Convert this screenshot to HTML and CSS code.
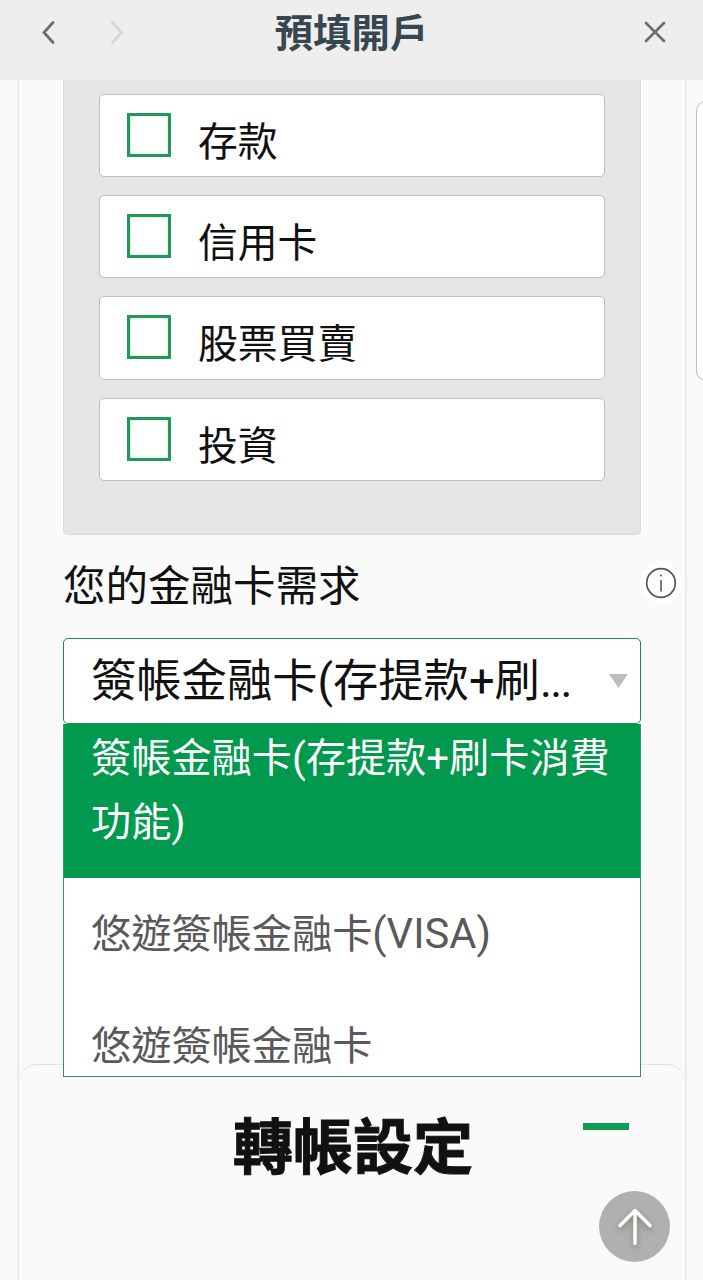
FILE: index.html
```html
<!DOCTYPE html>
<html lang="zh-Hant">
<head>
<meta charset="utf-8">
<title>預填開戶</title>
<link rel="stylesheet" href="styles.css">
</head>
<body>
<header class="topbar">
  <svg class="nav-icon nav-back" viewBox="0 0 16 24"><path d="M13 2.500 4 12.500l9 10"/></svg>
  <svg class="nav-icon nav-next" viewBox="0 0 16 24"><path d="m4.500 2.500 9 10-9 10"/></svg>
  <h1 class="topbar-title">預填開戶</h1>
  <svg class="nav-icon nav-close" viewBox="0 0 24 24"><path d="m3 3 18 18m0-18L3 21"/></svg>
</header>
<main class="page">
  <aside class="next-card"></aside>
  <section class="form">
    <ul class="checks">
      <li class="check"><span class="box"></span><span class="check-text">存款</span></li>
      <li class="check"><span class="box"></span><span class="check-text">信用卡</span></li>
      <li class="check"><span class="box"></span><span class="check-text">股票買賣</span></li>
      <li class="check"><span class="box"></span><span class="check-text">投資</span></li>
    </ul>
    <div class="field-head">
      <span class="field-label">您的金融卡需求</span>
      <svg class="info" viewBox="0 0 40 40"><circle class="info-bg" cx="20" cy="20" r="20"/><circle class="info-ring" cx="20" cy="20" r="14.300"/><path class="info-stem" d="M20 17v11.500"/><circle class="info-dot" cx="20" cy="12.500" r="1"/></svg>
    </div>
    <div class="select">
      <div class="select-box">
        <span class="select-value">簽帳金融卡(存提款+刷<span class="dots">...</span></span>
        <svg class="caret" viewBox="0 0 19 14"><path d="M0 0h19L9.500 14z"/></svg>
      </div>
      <div class="menu">
        <div class="option option-active">簽帳金融卡(存提款+刷卡消費功能)</div>
        <div class="option">悠遊簽帳金融卡<span class="latin">(VISA)</span></div>
        <div class="option">悠遊簽帳金融卡</div>
      </div>
    </div>
  </section>
  <section class="accordion">
    <h2 class="accordion-title">轉帳設定</h2>
    <span class="minus"></span>
  </section>
</main>
<div class="to-top">
  <svg class="to-top-icon" viewBox="0 0 36 40"><path d="M18 36.500V3.500M3 18.500l15-15 15 15"/></svg>
</div>
</body>
</html>
```
FILE: styles.css
```css
* { box-sizing: border-box; }
body {
  margin: 0;
  height: 1280px;
  overflow: hidden;
  position: relative;
  background: #fafafa;
  color: #111;
  font-family: Roboto, "Noto Sans CJK TC", sans-serif;
}
h1, h2, ul { margin: 0; padding: 0; }
.topbar {
  height: 80px;
  background: #eee;
  display: grid;
  grid-template-columns: 40px 68px 1fr 108px;
  align-items: start;
}
.nav-icon { fill: none; stroke: #68716f; stroke-width: 2.8; stroke-linecap: round; }
.nav-back { width: 16px; height: 24px; margin: 20px 0 0 40px; }
.nav-next { width: 16px; height: 24px; margin: 20px 0 0 68px; stroke: #d6d6d6; }
.nav-close { width: 24px; height: 24px; margin: 20px 0 0 48px; stroke-width: 2.6; }
.topbar-title {
  text-align: center;
  font-size: 38.400px;
  line-height: 68px;
  font-weight: 700;
  color: #37474f;
}
.page {
  position: relative;
  height: 1200px;
  padding: 0 16px 0 17px;
  overflow: hidden;
}
.next-card {
  position: absolute;
  left: 696px;
  top: 21px;
  width: 40px;
  height: 280px;
  border: 1px solid #bbb;
  border-radius: 10px;
  background: #fff;
}
.form {
  height: 984px;
  padding: 0 45px;
  border: solid #e9e9e9;
  border-width: 0 2px 0 2px;
}
.checks {
  list-style: none;
  height: 455px;
  margin-left: -1px;
  width: 578px;
  padding: 13.500px 36px 0;
  display: flex;
  flex-direction: column;
  gap: 17.800px;
  background: #e5e5e5;
  border: 1px solid #dadada;
  border-top: 0;
  border-radius: 0 0 5px 5px;
}
.check {
  height: 83.600px;
  width: 506px;
  margin-left: -1px;
  display: flex;
  align-items: flex-start;
  padding: 18px 0 0 27px;
  gap: 27px;
  background: #fff;
  border: 1px solid #bfbfbf;
  border-radius: 5px;
}
.box { width: 44px; height: 44px; border: 3px solid #22975a; box-shadow: inset 0 0 2px #8ed0ab; }
.check-text { font-size: 39.800px; line-height: 60px; }
.field-head {
  height: 103px;
  width: 620px;
  display: flex;
  justify-content: space-between;
  margin-left: -1px;
}
.field-label { font-size: 42.500px; line-height: 103px; }
.info { width: 40px; height: 40px; margin: 28px 2px 0 0; }
.info-bg { fill: #fff; }
.info-ring { fill: none; stroke: #555; stroke-width: 1.700; }
.info-stem { stroke: #555; stroke-width: 1.600; }
.info-dot { fill: #555; }
.select { position: relative; width: 578px; margin-left: -1px; }
.select-box {
  height: 86px;
  display: flex;
  justify-content: space-between;
  align-items: center;
  padding: 0 12px 0 27px;
  background: #fff;
  border: 1.500px solid #1c8b57;
  border-radius: 5px;
}
.select-value { font-size: 45.300px; line-height: 84px; white-space: nowrap; padding-top: 2px; }
.dots { letter-spacing: -1.600px; }
.caret { width: 19px; height: 14px; fill: #bdbdbd; }
.menu {
  position: absolute;
  z-index: 2;
  top: 86px;
  left: 0;
  width: 578px;
  height: 353px;
  overflow: hidden;
  background: #fff;
  border: 1px solid #34906b;
  border-top: 0;
}
.option {
  font-size: 40.200px;
  line-height: 64px;
  height: 112px;
  padding: 25px 27px;
  color: #595959;
}
.latin { font-size: 41.700px; line-height: 1; }
.option-active { height: 154px; padding-top: 3px; background: #00994e; color: #fff; }
.accordion {
  height: 216px;
  display: grid;
  grid-template-columns: 1fr auto;
  align-items: start;
  border: solid #e9e9e9;
  border-width: 0 2px;
  position: relative;
}
.accordion::before {
  content: "";
  position: absolute;
  inset: 0;
  border-top: 1px solid #e2e2e2;
  border-radius: 18px 18px 0 0;
}
.accordion-title {
  font-size: 60px;
  line-height: 80px;
  font-weight: 700;
  -webkit-text-stroke: 1px #111;
  margin: 45px 0 0 104px;
  text-align: center;
}
.minus { width: 46px; height: 7px; margin: 59px 56px 0 0; background: #0d9e55; }
.to-top {
  position: absolute;
  left: 599px;
  top: 1191px;
  width: 71px;
  height: 71px;
  border-radius: 50%;
  background: #b0b0b0;
  display: grid;
  place-items: center;
}
.to-top-icon {
  width: 36px;
  height: 40px;
  fill: none;
  stroke: #fff;
  stroke-width: 3.500;
  stroke-linecap: round;
  stroke-linejoin: round;
  filter: drop-shadow(0 3px 3px #7b806f);
}
```
